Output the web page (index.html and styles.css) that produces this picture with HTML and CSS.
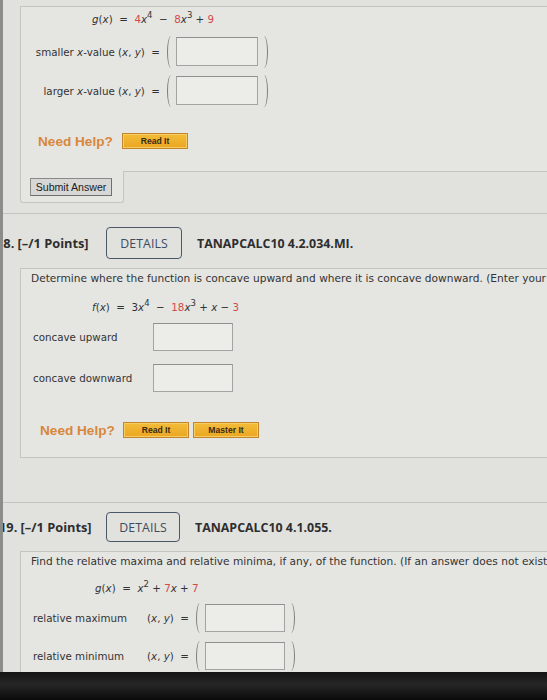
FILE: index.html
```html
<!DOCTYPE html>
<html>
<head>
<meta charset="utf-8">
<link rel="stylesheet" href="styles.css">
</head>
<body>
<div class="screen">
  <section class="q q17">
    <div class="qbox qbox17">
      <div class="formula f17"><i>g</i>(<i>x</i>) &nbsp;=&nbsp; <span class="c">4</span><i>x</i><sup>4</sup> &nbsp;−&nbsp; <span class="c">8</span><i>x</i><sup>3</sup> + <span class="c">9</span></div>
      <div class="prow pr17 first">
        <span class="plabel">smaller <i>x</i>-value (<i>x</i>, <i>y</i>) &nbsp;=</span>
        <span class="paren pl"></span><span class="inp"></span><span class="paren pr"></span>
      </div>
      <div class="prow pr17 second">
        <span class="plabel">larger <i>x</i>-value (<i>x</i>, <i>y</i>) &nbsp;=</span>
        <span class="paren pl"></span><span class="inp"></span><span class="paren pr"></span>
      </div>
      <div class="help help17">
        <span class="help-label">Need Help?</span>
        <span class="hbtn">Read It</span>
      </div>
    </div>
    <div class="tab">
      <span class="submit">Submit Answer</span>
    </div>
  </section>

  <section class="q q18">
    <div class="qhead head18">
      <span class="points p18">18. [–/1 Points]</span>
      <span class="details">DETAILS</span>
      <span class="qtitle">TANAPCALC10 4.2.034.MI.</span>
    </div>
    <div class="qbox qbox18">
      <div class="prompt">Determine where the function is concave upward and where it is concave downward. (Enter your</div>
      <div class="formula f18"><i>f</i>(<i>x</i>) &nbsp;=&nbsp; 3<i>x</i><sup>4</sup> &nbsp;−&nbsp; <span class="c">18</span><i>x</i><sup>3</sup> + <i>x</i> − <span class="c">3</span></div>
      <div class="crow c1"><span class="clabel">concave upward</span><span class="inp"></span></div>
      <div class="crow c2"><span class="clabel">concave downward</span><span class="inp"></span></div>
      <div class="help help18">
        <span class="help-label">Need Help?</span>
        <span class="hbtn">Read It</span>
        <span class="hbtn master">Master It</span>
      </div>
    </div>
  </section>

  <section class="q q19">
    <div class="qhead head19">
      <span class="points p19">19. [–/1 Points]</span>
      <span class="details d19">DETAILS</span>
      <span class="qtitle">TANAPCALC10 4.1.055.</span>
    </div>
    <div class="qbox qbox19">
      <div class="prompt">Find the relative maxima and relative minima, if any, of the function. (If an answer does not exist,</div>
      <div class="formula f19"><i>g</i>(<i>x</i>) &nbsp;=&nbsp; <i>x</i><sup>2</sup> + <span class="c">7</span><i>x</i> + <span class="c">7</span></div>
      <div class="mrow m1">
        <span class="mlabel">relative maximum</span>
        <span class="xy">(<i>x</i>, <i>y</i>) &nbsp;=</span>
        <span class="paren pl"></span><span class="inp"></span><span class="paren pr"></span>
      </div>
      <div class="mrow m2">
        <span class="mlabel">relative minimum</span>
        <span class="xy">(<i>x</i>, <i>y</i>) &nbsp;=</span>
        <span class="paren pl"></span><span class="inp"></span><span class="paren pr"></span>
      </div>
    </div>
  </section>
</div>
<div class="bezel"></div>
</body>
</html>
```

FILE: styles.css
```css
* { box-sizing: border-box; }
html, body { margin: 0; padding: 0; }
body {
  width: 547px;
  height: 700px;
  overflow: hidden;
  background: #0c0c0c;
  font-family: "DejaVu Sans", Verdana, sans-serif;
  font-size: 10.3px;
  color: #333;
}
i { font-style: italic; }
sup { font-size: 8.5px; line-height: 0; vertical-align: 5px; }
.c { color: #d24a4d; }

.screen {
  height: 672px;
  overflow: hidden;
  background: #e1e1de;
  border-left: 3px solid #8c8c8a;
}
.bezel {
  height: 28px;
  background: linear-gradient(#151515, #262626 45%, #0a0a0a);
}

/* sections */
.q { border-bottom: 1px solid #c3c3c0; white-space: nowrap; }
.q17 { height: 214px; padding-top: 6px; }
.q18 { height: 289px; padding-top: 13px; }
.q19 { height: 200px; padding-top: 9px; border-bottom: none; }

.qbox {
  margin-left: 17px;
  width: 560px;
  background: #e5e5e2;
  border-top: 1px solid #c4c4c1;
  border-left: 1px solid #c4c4c1;
  border-bottom: 1px solid #c4c4c1;
}
.qbox17 { height: 166px; padding-top: 5px; }
.qbox18 { height: 190px; margin-top: 9px; padding-top: 2px; }
.qbox19 { height: 140px; margin-top: 9px; padding-top: 2px; }

.formula { line-height: 14px; }
.f17 { margin-left: 71px; }
.f18 { margin-left: 71px; margin-top: 15px; }
.f19 { margin-left: 74px; margin-top: 13px; }

.prompt { line-height: 14px; margin-left: 10px; font-size: 10.6px; }

/* inputs */
.inp {
  display: block;
  width: 82px;
  height: 29px;
  background: #ecece9;
  border: 1px solid #a3a3a1;
  border-top-color: #8f8f8d;
}
.paren {
  display: block;
  width: 8px;
  height: 32px;
  border-radius: 50%;
}
.paren.pl { border-left: 1.5px solid #7d7d7b; margin-right: 1px; }
.paren.pr { border-right: 1.5px solid #7d7d7b; margin-left: 2px; }

/* q17 rows */
.prow { display: flex; align-items: center; height: 29px; }
.pr17.first { margin-top: 11px; }
.pr17.second { margin-top: 10px; }
.plabel { width: 139px; text-align: right; }
.pr17 .paren.pl { margin-left: 7px; }

/* help */
.help { display: flex; align-items: center; height: 16px; }
.help-label {
  font-family: "Liberation Sans", Arial, sans-serif;
  font-weight: bold;
  font-size: 13.6px;
  color: #d8873b;
}
.help17 { margin-top: 28px; margin-left: 17px; }
.help17 .help-label { width: 84px; }
.help18 { margin-top: 30px; margin-left: 19px; }
.help18 .help-label { width: 83px; }
.hbtn {
  display: flex;
  align-items: center;
  justify-content: center;
  width: 66px;
  height: 16px;
  background: linear-gradient(#f3bc3a, #eaa622);
  border: 1px solid #c3852a;
  box-shadow: inset 0 0 0 1px #f6cd62;
  font-family: "Liberation Sans", Arial, sans-serif;
  font-weight: bold;
  font-size: 8.6px;
  color: #3a2a12;
}
.hbtn.master { margin-left: 4px; }

/* submit tab */
.tab {
  margin-left: 17px;
  margin-top: -1px;
  width: 104px;
  height: 32px;
  background: #e5e5e2;
  border-left: 1px solid #c4c4c1;
  border-right: 1px solid #c4c4c1;
  border-bottom: 1px solid #c4c4c1;
  border-radius: 0 0 3px 3px;
  padding-top: 7px;
  padding-left: 9px;
}
.submit {
  display: flex;
  align-items: center;
  justify-content: center;
  width: 82px;
  height: 18px;
  background: #d7d7d5;
  border: 1px solid #8a8a88;
  border-right-color: #6f6f6d;
  border-bottom-color: #6f6f6d;
  font-family: "Liberation Sans", Arial, sans-serif;
  font-size: 10.6px;
  color: #222;
}

/* headers */
.qhead { display: flex; align-items: center; height: 32px; font-family: "Open Sans", sans-serif; }
.head19 { height: 30px; }
.points { font-weight: bold; font-size: 12.8px; color: #2e2e2e; flex: 0 0 auto; }
.p18 { margin-left: -7px; width: 110px; }
.p19 { margin-left: -4px; width: 107px; }
.details {
  display: flex;
  align-items: center;
  justify-content: center;
  width: 76px;
  height: 32px;
  border: 1.5px solid #4a5869;
  border-radius: 4px;
  font-size: 12.3px;
  color: #3d4b5c;
  letter-spacing: 0.1px;
}
.d19 { width: 74px; height: 30px; }
.qtitle { margin-left: 15px; font-weight: bold; font-size: 12.4px; color: #2e2e2e; }

/* q18 rows */
.crow { display: flex; align-items: center; height: 28px; }
.crow .inp { height: 28px; width: 80px; }
.c1 { margin-top: 9px; }
.c2 { margin-top: 13px; }
.clabel { width: 120px; margin-left: 12px; }

/* q19 rows */
.mrow { display: flex; align-items: center; height: 28px; }
.mrow .inp { height: 28px; width: 80px; }
.m1 { margin-top: 9px; }
.m2 { margin-top: 10px; }
.mlabel { width: 114px; margin-left: 12px; }
.xy { width: 49px; }
.mrow .paren { height: 30px; }
```
